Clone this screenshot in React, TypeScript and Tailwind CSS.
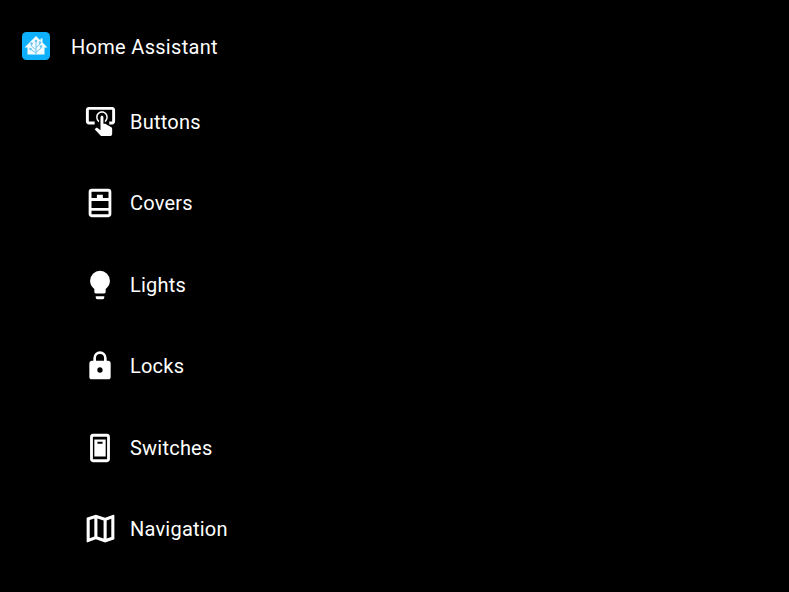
import React from "react";

const items = [
  {
    label: "Buttons",
    size: "w-[35px] h-[35px]",
    d: "M13 5C15.21 5 17 6.79 17 9C17 10.5 16.2 11.77 15 12.46V11.24C15.61 10.69 16 9.89 16 9C16 7.34 14.66 6 13 6S10 7.34 10 9C10 9.89 10.39 10.69 11 11.24V12.46C9.8 11.77 9 10.5 9 9C9 6.79 10.79 5 13 5M20 20.5C19.97 21.32 19.32 21.97 18.5 22H13C12.62 22 12.26 21.85 12 21.57L8 17.37L8.74 16.6C8.93 16.39 9.2 16.28 9.5 16.28H9.7L12 18V9C12 8.45 12.45 8 13 8S14 8.45 14 9V13.47L15.21 13.6L19.15 15.79C19.68 16.03 20 16.56 20 17.14V20.5M20 2H4C2.9 2 2 2.9 2 4V12C2 13.11 2.9 14 4 14H8V12L4 12L4 4H20L20 12H18V14H20V13.96L20.04 14C21.13 14 22 13.09 22 12V4C22 2.9 21.11 2 20 2Z",
  },
  {
    label: "Covers",
    size: "w-[34px] h-[34px]",
    d: "M6 2H18C19.1 2 20 2.9 20 4V20C20 21.1 19.1 22 18 22H6C4.9 22 4 21.1 4 20V4C4 2.9 4.9 2 6 2ZM6 4V8.5H9.8V6.2H14V8.5H18V4H6ZM6 10.5V15.5H18V10.5H6ZM6 17.5V20H18V17.5H6Z",
  },
  {
    label: "Lights",
    size: "w-[34px] h-[34px]",
    d: "M12,2A7,7 0 0,0 5,9C5,11.38 6.19,13.47 8,14.74V17A1,1 0 0,0 9,18H15A1,1 0 0,0 16,17V14.74C17.81,13.47 19,11.38 19,9A7,7 0 0,0 12,2M9,21A1,1 0 0,0 10,22H14A1,1 0 0,0 15,21V20H9V21Z",
  },
  {
    label: "Locks",
    size: "w-[32px] h-[32px]",
    d: "M12,17A2,2 0 0,0 14,15C14,13.89 13.1,13 12,13A2,2 0 0,0 10,15A2,2 0 0,0 12,17M18,8A2,2 0 0,1 20,10V20A2,2 0 0,1 18,22H6A2,2 0 0,1 4,20V10C4,8.89 4.9,8 6,8H7V6A5,5 0 0,1 12,1A5,5 0 0,1 17,6V8H18M12,3A3,3 0 0,0 9,6V8H15V6A3,3 0 0,0 12,3Z",
  },
  {
    label: "Switches",
    size: "w-[34px] h-[34px]",
    d: "M7 2H17C18.1 2 19 2.9 19 4V20C19 21.1 18.1 22 17 22H7C5.9 22 5 21.1 5 20V4C5 2.9 5.9 2 7 2ZM7 4V20H17V4H7ZM8 6H16V18H8V6ZM10.2 7.6V9H13.8V7.6H10.2Z",
  },
  {
    label: "Navigation",
    size: "w-[37px] h-[37px]",
    d: "M20.5,3L20.34,3.03L15,5.1L9,3L3.36,4.9C3.15,4.97 3,5.15 3,5.38V20.5A0.5,0.5 0 0,0 3.5,21L3.66,20.97L9,18.9L15,21L20.64,19.1C20.85,19.03 21,18.85 21,18.62V3.5A0.5,0.5 0 0,0 20.5,3M10,5.47L14,6.87V18.53L10,17.13V5.47M5,6.46L8,5.45V17.15L5,18.31V6.46M19,17.54L16,18.55V6.86L19,5.69V17.54Z",
  },
];

// Home Assistant logo, house with the little circuit tree inside
const Logo = () => (
  <svg viewBox="0 0 28 28" className="w-[28px] h-[28px] shrink-0">
    <rect width="28" height="28" rx="4.5" fill="#0fb0fb" />
    <path
      d="M14 4L18.5 8.5V6.5H20.5V10.5L25.5 15.5H22.5V22.5H5.5V15.5H2.5L14 4Z"
      fill="#f4fbff"
    />
    <g stroke="#6cc6f0" strokeWidth="1" fill="none">
      <path d="M14 8V22.5" />
      <path d="M14 18L9.5 14V12" />
      <path d="M14 15.5L18 12V10.5" />
      <path d="M14 20.5L19 16V14.5" />
      <path d="M14 21L9 17.5" />
    </g>
    <g fill="#6cc6f0">
      <circle cx="14" cy="9" r="1.3" />
      <circle cx="9.5" cy="11.5" r="1.3" />
      <circle cx="18" cy="10.5" r="1.3" />
      <circle cx="19" cy="14.5" r="1.3" />
      <circle cx="8.5" cy="17" r="1.3" />
    </g>
  </svg>
);

export default function App() {
  return (
    <div className="relative w-[789px] h-[592px] overflow-hidden bg-black text-white font-['Roboto',sans-serif]">
      <header className="flex items-center h-[28px] mt-[32px] ml-[22px] gap-[21px]">
        <Logo />
        <span className="pt-[2px] text-[20px] leading-none tracking-[0.3px]">Home Assistant</span>
      </header>
      <nav className="flex flex-col mt-[21.3px] ml-[83px]">
        {items.map((item) => (
          <div key={item.label} className="flex items-center h-[81.4px]">
            <div className="flex items-center justify-center w-[34px] h-[37px] shrink-0 overflow-visible">
              <svg viewBox="0 0 24 24" fill="#fff" className={`${item.size} shrink-0`}>
                <path d={item.d} fillRule="evenodd" />
              </svg>
            </div>
            <span className="ml-[13px] text-[20px] leading-none tracking-[0.22px]">{item.label}</span>
          </div>
        ))}
      </nav>
    </div>
  );
}
